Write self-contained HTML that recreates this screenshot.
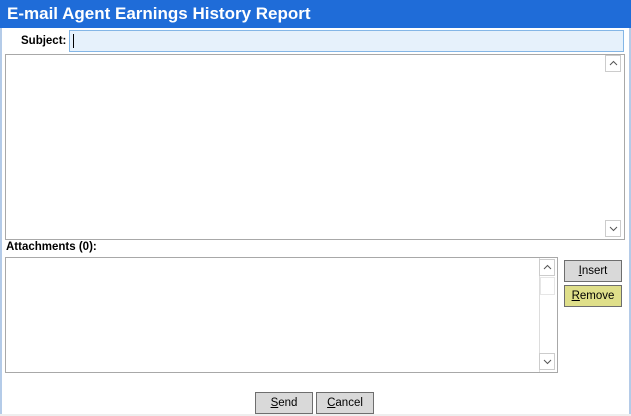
<!DOCTYPE html>
<html><head><style>
*{box-sizing:border-box;margin:0;padding:0}
body{width:631px;height:416px;background:#fff;font-family:"Liberation Sans",Arial,sans-serif;font-size:12px;position:relative;overflow:hidden}
.a{position:absolute}
.title{left:0;top:0;width:631px;height:28px;background:#1f6cd8;color:#fff;font-weight:bold;font-size:17px;line-height:28px;padding-left:7px}
.lb{left:0;top:28px;width:2px;height:388px;background:#b4cbe8}
.rb{left:629px;top:28px;width:2px;height:388px;background:#b4cbe8}
.btn{position:absolute;background:#d9d9d9;border:1px solid #6e6e6e;text-align:center;line-height:20px;font-size:11.5px;color:#000}
.arr{position:absolute;width:16px;height:17px;border:1px solid #ccc;background:#fff}
.arr svg{position:absolute;left:3px;top:4px}
</style></head><body>
<div class="a title">E-mail Agent Earnings History Report</div>
<div class="a lb"></div><div class="a rb"></div>
<div class="a" style="left:21px;top:35px;font-weight:bold;font-size:11.5px">Subject:</div>
<div class="a" style="left:69px;top:30px;width:555px;height:22px;background:#e6f1fb;border:1px solid #84b6e6"></div>
<div class="a" style="left:73px;top:34px;width:1px;height:14px;background:#000"></div>
<div class="a" style="left:5px;top:54px;width:620px;height:186px;border:1px solid #a8a8a8"></div>
<div class="arr" style="left:605px;top:55px"><svg width="9" height="7"><path d="M1 5 L4.5 1.5 L8 5" fill="none" stroke="#555"/></svg></div>
<div class="arr" style="left:605px;top:220px"><svg width="9" height="7"><path d="M1 2 L4.5 5.5 L8 2" fill="none" stroke="#555"/></svg></div>
<div class="a" style="left:6px;top:241px;font-weight:bold;font-size:11.5px">Attachments (0):</div>
<div class="a" style="left:5px;top:257px;width:553px;height:116px;border:1px solid #a8a8a8"></div>
<div class="a" style="left:539px;top:258px;width:17px;height:114px;border-left:1px solid #ddd"></div>
<div class="arr" style="left:539px;top:259px"><svg width="9" height="7"><path d="M1 5 L4.5 1.5 L8 5" fill="none" stroke="#555"/></svg></div>
<div class="a" style="left:540px;top:277px;width:15px;height:18px;border:1px solid #e6e6e6"></div>
<div class="arr" style="left:539px;top:353px"><svg width="9" height="7"><path d="M1 2 L4.5 5.5 L8 2" fill="none" stroke="#555"/></svg></div>
<div class="btn" style="left:564px;top:260px;width:58px;height:22px"><u>I</u>nsert</div>
<div class="btn" style="left:564px;top:285px;width:58px;height:22px;background:#dfdf8a"><u>R</u>emove</div>
<div class="btn" style="left:255px;top:392px;width:58px;height:22px"><u>S</u>end</div>
<div class="btn" style="left:316px;top:392px;width:58px;height:22px"><u>C</u>ancel</div>
<div class="a" style="left:0;top:414px;width:631px;height:2px;background:#eee"></div>
</body></html>
